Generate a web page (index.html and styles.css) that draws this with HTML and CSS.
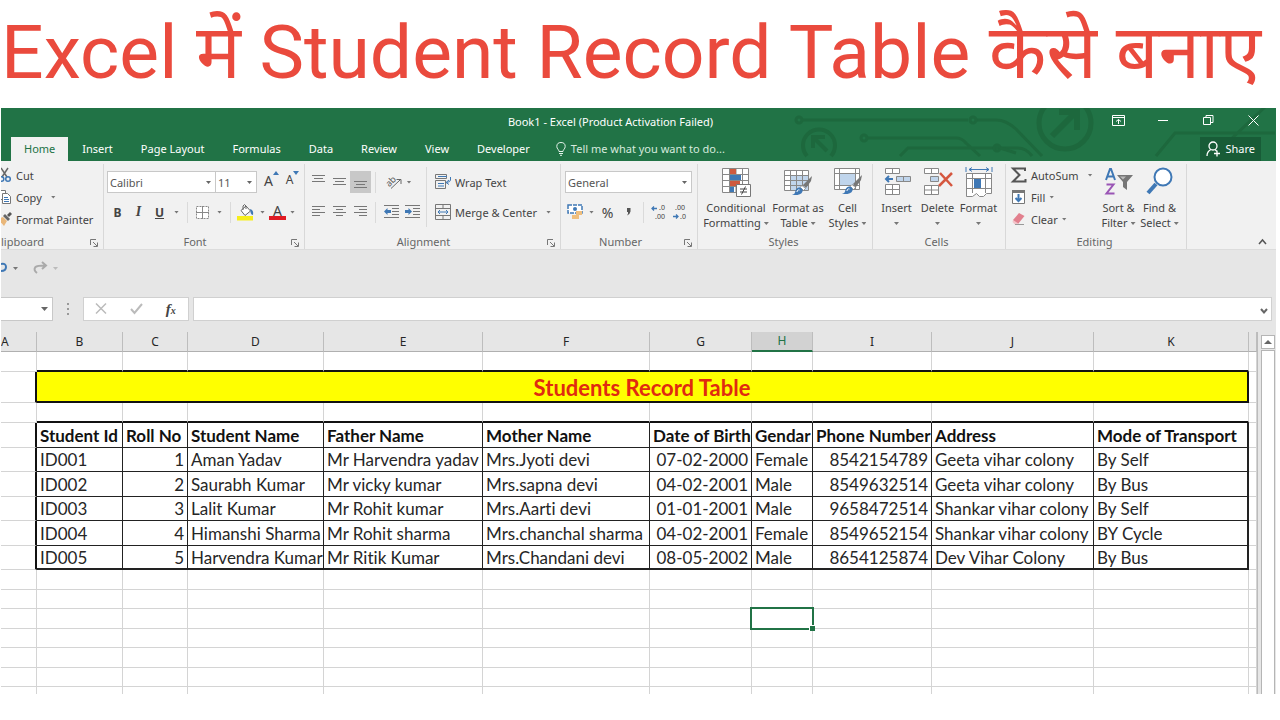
FILE: index.html
```html
<!DOCTYPE html>
<html lang="en">
<head>
  <meta charset="UTF-8" />
  <meta name="viewport" content="width=device-width, initial-scale=1.0"/>
  <title>Student Record Table</title>
  <link rel="stylesheet" href="styles.css">
</head>
<body>

  <!-- shared symbols -->
  <svg class="sprite" aria-hidden="true">
    <symbol id="launcher" viewBox="0 0 8 8"><path d="M.5 6V.5H6M3 3l4 4M7.500 3.500v4h-4" fill="none" stroke="#777"/></symbol>
    <symbol id="brush" viewBox="0 0 22 22"><path d="M21 1l-9 9 3 3 5-7z" fill="#777"/><path d="M11 10.500l3.500 3-2 2-3.500-3z" fill="#fff" stroke="#777" stroke-width=".7"/><path d="M9 12.500c2 .5 3 2 2.500 4-1 3-5 4-10.500 3.500 3-1 3-2.500 3.500-4.500.5-2 2.500-3.500 4.500-3z" fill="#3f78b5"/><path d="M6 17c0-1.500 1-2.500 2.500-2" fill="none" stroke="#fff"/></symbol>
  </svg>

  <h1 class="headline" lang="hi">Excel में Student Record Table कैसे बनाए</h1>

  <div class="window">
    <header class="titlebar">
      <svg class="circuit" width="490" height="53" viewBox="0 0 490 53" fill="none" stroke="#1d683d" stroke-width="3" aria-hidden="true">
        <circle cx="13" cy="12" r="3"/><path d="M16 12h166M190 12h20q10 0 20 9l26 27"/><circle cx="187" cy="12" r="3"/>
        <circle cx="78" cy="30" r="3"/><path d="M81 30h89q6 0 10 5l14 13M114 48l8-8h110q8 0 14 8"/>
        <path d="M21 48a16 16 0 1 1 24 0" stroke-width="4"/><path d="M41 43L27 29M27 40V29h12" stroke-width="4"/>
        <circle cx="279" cy="15" r="26" stroke-width="5"/><path d="M266 28l25-25M273 4h18v18" stroke-width="6"/>
        <circle cx="211" cy="40" r="3"/><path d="M214 40l16 5M370 48l19-23h100M442 34L480-2"/>
      </svg>
      <div class="title-row">
        <div class="doc-title">Book1 - Excel (Product Activation Failed)</div>
        <button class="win-btn" aria-label="Ribbon display options"><svg width="13" height="11" viewBox="0 0 13 11" fill="none" stroke="#fff"><path d="M.5.500h12v10H.5zM.5 2.500h12M6.500 9V4.500M4 6.500l2.500-2 2.500 2"/></svg></button>
        <button class="win-btn" aria-label="Minimize"><svg width="11" height="11" viewBox="0 0 11 11"><path d="M0 5.500h10" stroke="#fff"/></svg></button>
        <button class="win-btn" aria-label="Restore"><svg width="11" height="11" viewBox="0 0 11 11" fill="none" stroke="#fff"><path d="M.5 2.500h7v7h-7zM3 2.500v-2h7v7H7.500"/></svg></button>
        <button class="win-btn" aria-label="Close"><svg width="11" height="11" viewBox="0 0 11 11"><path d="M.5.500l10 10M10.500.500l-10 10" stroke="#fff"/></svg></button>
      </div>
      <nav class="tabs">
        <a href="#home" class="tab active">Home</a>
        <a href="#insert" class="tab">Insert</a>
        <a href="#layout" class="tab">Page Layout</a>
        <a href="#formulas" class="tab">Formulas</a>
        <a href="#data" class="tab">Data</a>
        <a href="#review" class="tab">Review</a>
        <a href="#view" class="tab">View</a>
        <a href="#developer" class="tab">Developer</a>
        <button class="tell-me">
          <svg width="10" height="14" viewBox="0 0 10 14" fill="none" stroke="#e4f2ea"><path d="M3 9.500C3 7.500.8 7 .8 4.500a4.200 4 0 0 1 8.400 0C9.200 7 7 7.500 7 9.500zM3 11.500h4M4 13.300h2"/></svg>
          Tell me what you want to do...
        </button>
        <button class="share">
          <svg width="15" height="16" viewBox="0 0 15 16" fill="none" stroke="#fff" stroke-width="1.300"><circle cx="7" cy="5" r="4"/><path d="M1 15c0-3 2-5.500 4-6.500M9 8.500l1.500 1.500M11 9.500v6M8 12.500h6"/></svg>
          Share
        </button>
      </nav>
    </header>

    <div class="ribbon">
      <section class="group clipboard">
        <div class="stack">
          <button class="tool"><svg width="16" height="16" viewBox="0 0 16 16" fill="none" stroke-width="1.500"><path d="M5 1l6 9M12 1L6 10" stroke="#666"/><circle cx="5.500" cy="12" r="2.300" stroke="#3f78b5"/><circle cx="12" cy="12" r="2.300" stroke="#3f78b5"/></svg>Cut</button>
          <button class="tool"><svg width="16" height="16" viewBox="0 0 16 16" fill="#fff" stroke="#777"><path d="M2.500 1.500h7v9h-7z"/><path d="M6.500 4.500h5l3 3v7h-8z"/><path d="M8 8.500h4M8 10.500h5M8 12.500h5" stroke="#3f78b5"/></svg>Copy<i class="caret"></i></button>
          <button class="tool"><svg width="16" height="16" viewBox="0 0 16 16"><path d="M2 8l5-2 4 4-3 5z" fill="#e9b77a"/><path d="M7 5l2-2 5 5-2 2z" fill="#666"/><path d="M11 4l3-3 2 2-3 3z" fill="#555"/></svg>Format Painter</button>
        </div>
        <div class="group-name"><span>Clipboard</span><svg class="launch"><use href="#launcher"/></svg></div>
      </section>

      <section class="group font">
        <div class="rows">
          <div class="row">
            <label class="drop face"><select aria-label="Font"><option>Calibri</option></select></label>
            <label class="drop size"><select aria-label="Font size"><option>11</option></select></label>
            <button class="icon-btn grow" aria-label="Increase font size">A<svg width="6" height="4"><path d="M0 4l3-4 3 4z" fill="#3f78b5"/></svg></button>
            <button class="icon-btn shrink" aria-label="Decrease font size">A<svg width="6" height="4"><path d="M0 0h6L3 4z" fill="#3f78b5"/></svg></button>
          </div>
          <div class="row">
            <button class="icon-btn"><b>B</b></button>
            <button class="icon-btn ital"><i>I</i></button>
            <button class="icon-btn"><b><u>U</u></b></button>
            <i class="caret"></i>
            <span class="sep"></span>
            <button class="icon-btn" aria-label="Borders"><svg width="13" height="13" viewBox="0 0 13 13" fill="#fff" stroke="#888"><path d="M.5.500h12v12H.5z" stroke-dasharray="2 1"/><path d="M6.500 0v13M0 6.500h13"/></svg></button>
            <i class="caret"></i>
            <span class="sep"></span>
            <button class="icon-btn" aria-label="Fill color"><svg width="17" height="17" viewBox="0 0 17 17"><path d="M0 12h16v4.500H0z" fill="#f6ee1c"/><path d="M4 6.500L9 2l4.500 5L8 11.500z" fill="#fff" stroke="#666"/><path d="M6 6V2q1.500-3 3 0v3" fill="none" stroke="#666"/><path d="M13 5q4 1 3 6-2 0-2.500-3z" fill="#3f78b5"/></svg></button>
            <i class="caret"></i>
            <button class="icon-btn color-a" aria-label="Font color">A</button>
            <i class="caret"></i>
          </div>
        </div>
        <div class="group-name"><span>Font</span><svg class="launch"><use href="#launcher"/></svg></div>
      </section>

      <section class="group align">
        <div class="halves">
          <div class="rows">
            <div class="row">
              <button class="icon-btn" aria-label="Top align"><svg width="15" height="14" stroke="#777"><path d="M1 .5h13M3 3.500h9M1 6.500h13"/></svg></button>
              <button class="icon-btn" aria-label="Middle align"><svg width="15" height="14" stroke="#777"><path d="M1 3.500h13M3 6.500h9M1 9.500h13"/></svg></button>
              <button class="icon-btn pressed" aria-label="Bottom align"><svg width="15" height="14" stroke="#777"><path d="M1 6.500h13M3 9.500h9M1 12.500h13"/></svg></button>
              <span class="sep"></span>
              <button class="icon-btn wide" aria-label="Orientation"><svg width="16" height="14" viewBox="0 0 16 14"><text x="1" y="9" class="ab" transform="rotate(-45 6 8)">ab</text><path d="M5 13.500L14 5M10.500 4.500H15V9" fill="none" stroke="#666"/></svg><i class="caret"></i></button>
            </div>
            <div class="row">
              <button class="icon-btn" aria-label="Align left"><svg width="15" height="12" stroke="#777"><path d="M1 .5h13M1 3.500h8M1 6.500h13M1 9.500h8"/></svg></button>
              <button class="icon-btn" aria-label="Center"><svg width="15" height="12" stroke="#777"><path d="M1 .5h13M4 3.500h7M1 6.500h13M4 9.500h7"/></svg></button>
              <button class="icon-btn" aria-label="Align right"><svg width="15" height="12" stroke="#777"><path d="M1 .5h13M6 3.500h8M1 6.500h13M6 9.500h8"/></svg></button>
              <span class="sep"></span>
              <button class="icon-btn" aria-label="Decrease indent"><svg width="16" height="14" stroke="#777"><path d="M1 .5h15M9 3.500h7M9 6.500h7M9 9.500h7M1 12.500h15"/><path d="M1 6.500l3.500-3.500v2H8v3H4.500v2z" fill="#3f78b5" stroke="none"/></svg></button>
              <button class="icon-btn" aria-label="Increase indent"><svg width="16" height="14" stroke="#777"><path d="M1 .5h15M9 3.500h7M9 6.500h7M9 9.500h7M1 12.500h15"/><path d="M8 6.500L4.500 3v2H1v3h3.500v2z" fill="#3f78b5" stroke="none"/></svg></button>
            </div>
          </div>
          <span class="sep tall"></span>
          <div class="rows">
            <button class="tool"><svg width="16" height="16" viewBox="0 0 16 16" fill="none" stroke="#777"><path d="M.5.500h11v4H.5zM.5 6.500h10v8H.5z"/><path d="M3 2.500h9M3 9.500h6M3 12h6" stroke="#3f78b5"/><path d="M15.500 3v3q0 2-4 2.500M14 6l-3 2.500 3 2" stroke="#3f78b5"/></svg>Wrap Text</button>
            <button class="tool"><svg width="16" height="16" viewBox="0 0 16 16" fill="none" stroke="#777"><path d="M.5.500h15v15H.5zM.5 4.500h15M.5 11.500h15M8 .5v4M8 11.500v4"/><path d="M3 8h10M5 6L3 8l2 2M11 6l2 2-2 2" stroke="#3f78b5"/></svg>Merge &amp; Center<i class="caret"></i></button>
          </div>
        </div>
        <div class="group-name"><span>Alignment</span><svg class="launch"><use href="#launcher"/></svg></div>
      </section>

      <section class="group number">
        <div class="rows">
          <div class="row">
            <label class="drop format"><select aria-label="Number format"><option>General</option></select></label>
          </div>
          <div class="row">
            <button class="icon-btn" aria-label="Accounting format"><svg width="17" height="16" viewBox="0 0 17 16"><path d="M1 1h14v8H1z" fill="#fff" stroke="#3f78b5" stroke-width="1.500" stroke-dasharray="4 1"/><circle cx="8" cy="5" r="2" fill="#3f78b5"/><path d="M9 7h6v4H9zM5 11h7v4H5z" fill="#efbe7d"/></svg></button>
            <i class="caret"></i>
            <button class="icon-btn pct">%</button>
            <button class="icon-btn comma" aria-label="Comma style"><svg width="5" height="8" viewBox="0 0 5 8"><path d="M1 0h3.500v3.500Q4 6.500 1 7.500q1.500-2 1-3.500H1z" fill="#555"/></svg></button>
            <span class="sep"></span>
            <button class="icon-btn" aria-label="Increase decimal"><svg width="16" height="18" viewBox="0 0 16 18"><path d="M6 5.500H1M3 3.500l-2 2 2 2" fill="none" stroke="#3f78b5" stroke-width="1.300"/><text x="8" y="7" class="dec">.0</text><text x="4" y="16" class="dec">.00</text></svg></button>
            <button class="icon-btn" aria-label="Decrease decimal"><svg width="16" height="18" viewBox="0 0 16 18"><text x="3" y="7" class="dec">.00</text><path d="M1 13.500h5M4 11.500l2 2-2 2" fill="none" stroke="#3f78b5" stroke-width="1.300"/><text x="8" y="16" class="dec">.0</text></svg></button>
          </div>
        </div>
        <div class="group-name"><span>Number</span><svg class="launch"><use href="#launcher"/></svg></div>
      </section>

      <section class="group styles">
        <div class="bigs">
          <button class="big w-cond"><svg width="30" height="30" viewBox="0 0 30 30"><path d="M1.500 1.500h26v24h-26zM8.500 1v25M15 1v25M21.500 1v25M1 7.500h27M1 13.500h27M1 19.500h27" fill="#fff" stroke="#888"/><path d="M9 2h6v5H9zM9 14h10v5H9z" fill="#cf5a3f"/><path d="M9 8h11v5H9zM9 20h4v5H9z" fill="#3f78b5"/><path d="M15.500 17.500h14v12h-14z" fill="#fff" stroke="#777"/><path d="M19 22h7M19 25h7M24.500 19.500l-4 8" stroke="#444"/></svg><span>Conditional<br>Formatting<i class="caret"></i></span></button>
          <button class="big w-table"><svg width="30" height="30" viewBox="0 0 30 30"><path d="M1.500 3.500h24v20h-24z" fill="#fff"/><path d="M8 9h17v14H8z" fill="#c0d5ec"/><path d="M1.500 3.500h24v20h-24zM7.500 3v20M13.500 3v20M19.500 3v20M1 8.500h24M1 13.500h24M1 18.500h24" fill="none" stroke="#888"/><use href="#brush" x="8" y="8" width="22" height="22"/></svg><span>Format as<br>Table<i class="caret"></i></span></button>
          <button class="big w-cell"><svg width="30" height="30" viewBox="0 0 30 30"><path d="M1.500 1.500h25v21h-25zM6.500 1v21M22.500 1v21M1 6.500h25M1 18.500h25" fill="#fff" stroke="#888"/><path d="M7 7h15v11H7z" fill="#c0d5ec"/><use href="#brush" x="8" y="7" width="22" height="22"/></svg><span>Cell<br>Styles<i class="caret"></i></span></button>
        </div>
        <div class="group-name"><span>Styles</span></div>
      </section>

      <section class="group cells">
        <div class="bigs">
          <button class="big"><svg width="28" height="30" viewBox="0 0 28 30" fill="#fff" stroke="#888"><path d="M2.500 1.500h14v5h-14zM9.500 1v5M2.500 17.500h14v10h-14zM9.500 17v10M2 22.500h14"/><path d="M13.500 9.500h14v5h-14zM20.500 9v6" fill="#c0d5ec"/><path d="M10 12H3M6 9l-3 3 3 3" fill="none" stroke="#3f78b5" stroke-width="2"/></svg><span>Insert<br><i class="caret"></i></span></button>
          <button class="big"><svg width="30" height="30" viewBox="0 0 30 30" fill="#fff" stroke="#888"><path d="M1.500 1.500h14v5h-14zM8.500 1v5M1.500 18.500h14v9h-14zM8.500 18v9M1 23h14"/><path d="M7.500 9.500h8v5h-8z" fill="#c0d5ec"/><path d="M17 6l12 13M29 6L16 19" fill="none" stroke="#d5573f" stroke-width="2.500"/></svg><span>Delete<br><i class="caret"></i></span></button>
          <button class="big"><svg width="28" height="30" viewBox="0 0 28 30" fill="#fff" stroke="#888"><path d="M1.500 6.500h25v20h-5l-3 3h-4l-3-3-4 3h-6zM7.500 6v20M20.500 6v20M1 11.500h25M1 21.500h25"/><path d="M9 12h7v9H9z" fill="#3f78b5" stroke="none"/><path d="M1 0v5M27 0v5M4 2.500h20M7 .5l-3 2 3 2M21 .5l3 2-3 2" fill="none" stroke="#3f78b5"/></svg><span>Format<br><i class="caret"></i></span></button>
        </div>
        <div class="group-name"><span>Cells</span></div>
      </section>

      <section class="group editing">
        <div class="halves">
          <div class="stack">
            <button class="tool"><svg width="16" height="16" viewBox="0 0 16 16"><path d="M14 4V1.500H2L8.500 8 2 14.500h12.500V12" fill="none" stroke="#555" stroke-width="2"/></svg>AutoSum<i class="caret far"></i></button>
            <button class="tool"><svg width="16" height="16" viewBox="0 0 16 16"><path d="M1.500 1.500h12v13h-12z" fill="#fff" stroke="#777"/><path d="M1 1h13v3H1z" fill="#777"/><path d="M7.500 5v7M4.500 9l3 3 3-3" fill="none" stroke="#3f78b5" stroke-width="2"/></svg>Fill<i class="caret"></i></button>
            <button class="tool"><svg width="16" height="16" viewBox="0 0 16 16"><path d="M2 9l6-7 5.500 3-6.500 8H4z" fill="#e2808e"/><path d="M2 9l5.500 3.500-1 1H4L1.500 11z" fill="#f3c4ca"/><path d="M4 13.500h9" stroke="#999"/></svg>Clear<i class="caret"></i></button>
          </div>
          <div class="bigs">
            <button class="big"><svg width="28" height="30" viewBox="0 0 28 30"><path d="M1 13L5 2h1l4 11M2.500 9.500h6" fill="none" stroke="#3f78b5" stroke-width="2"/><path d="M1.500 17.500h7l-7 9h8" fill="none" stroke="#9a55b5" stroke-width="2"/><path d="M12 8h16l-6 7v8l-4-3v-5z" fill="#777"/><path d="M15 9.500h6l-3 3z" fill="#bbb"/></svg><span>Sort &amp;<br>Filter<i class="caret"></i></span></button>
            <button class="big"><svg width="28" height="30" viewBox="0 0 28 30"><path d="M2 26l8-9" stroke="#3f78b5" stroke-width="4"/><circle cx="17" cy="10" r="8.500" fill="#fff" stroke="#3f78b5" stroke-width="2"/></svg><span>Find &amp;<br>Select<i class="caret"></i></span></button>
          </div>
        </div>
        <div class="group-name"><span>Editing</span></div>
      </section>

      <button class="collapse" aria-label="Collapse ribbon"><svg width="9" height="6" viewBox="0 0 9 6"><path d="M1 5l3.500-4L8 5" fill="none" stroke="#555" stroke-width="1.500"/></svg></button>
    </div>

    <div class="quick">
      <button aria-label="Undo"><svg width="7" height="12" viewBox="0 0 7 12"><path d="M0 3q5-1 5 3T0 10" fill="none" stroke="#3f78b5" stroke-width="2"/></svg></button>
      <i class="caret"></i>
      <button class="redo" aria-label="Redo"><svg width="15" height="13" viewBox="0 0 15 13" fill="none" stroke="#aaa" stroke-width="2"><path d="M4 12Q0 9 2.500 6 4 4.500 12 4.500M9 1l4 3.500L9 8"/></svg></button>
      <i class="caret pale"></i>
    </div>

    <div class="formula">
      <label class="drop name-box"><select aria-label="Name box"><option></option></select></label>
      <svg class="dots" width="2" height="12" fill="#999"><path d="M0 0h2v2H0zM0 5h2v2H0zM0 10h2v2H0z"/></svg>
      <div class="fx-tools">
        <button aria-label="Cancel"><svg width="12" height="11" viewBox="0 0 12 11"><path d="M1 .5l10 10M11 .5l-10 10" stroke="#bbb" stroke-width="1.500"/></svg></button>
        <button aria-label="Enter"><svg width="13" height="11" viewBox="0 0 13 11"><path d="M1 6l3.500 4L12 1" fill="none" stroke="#bbb" stroke-width="2"/></svg></button>
        <button class="fx">f<small>x</small></button>
      </div>
      <div class="fx-input">
        <input type="text" aria-label="Formula bar">
        <button aria-label="Expand formula bar"><svg width="8" height="6" viewBox="0 0 8 6"><path d="M1 1l3 3.500L7 1" fill="none" stroke="#666" stroke-width="2"/></svg></button>
      </div>
    </div>

    <div class="sheet">
      <table>
        <colgroup>
          <col class="ca"><col class="cb"><col class="cc"><col class="cd"><col class="ce"><col class="cf"><col class="cg"><col class="ch"><col class="ci"><col class="cj"><col class="ck"><col class="cl">
        </colgroup>
        <thead>
          <tr><th class="first">A</th><th>B</th><th>C</th><th>D</th><th>E</th><th>F</th><th>G</th><th class="current">H</th><th>I</th><th>J</th><th>K</th><th></th></tr>
        </thead>
        <tbody>
          <tr class="blank above"><td></td><td></td><td></td><td></td><td></td><td></td><td></td><td></td><td></td><td></td><td></td><td></td></tr>
          <tr class="banner"><td class="edge"></td><td colspan="10">Students Record Table</td><td></td></tr>
          <tr class="blank above"><td></td><td></td><td></td><td></td><td></td><td></td><td></td><td></td><td></td><td></td><td></td><td></td></tr>
          <tr class="rec names"><td class="edge"></td><td>Student Id</td><td>Roll No</td><td>Student Name</td><td>Father Name</td><td>Mother Name</td><td>Date of Birth</td><td>Gendar</td><td>Phone Number</td><td>Address</td><td>Mode of Transport</td><td></td></tr>
          <tr class="rec"><td class="edge"></td><td>ID001</td><td class="num">1</td><td>Aman Yadav</td><td>Mr Harvendra yadav</td><td>Mrs.Jyoti devi</td><td class="num">07-02-2000</td><td>Female</td><td class="num">8542154789</td><td>Geeta vihar colony</td><td>By Self</td><td></td></tr>
          <tr class="rec"><td class="edge"></td><td>ID002</td><td class="num">2</td><td>Saurabh Kumar</td><td>Mr vicky kumar</td><td>Mrs.sapna devi</td><td class="num">04-02-2001</td><td>Male</td><td class="num">8549632514</td><td>Geeta vihar colony</td><td>By Bus</td><td></td></tr>
          <tr class="rec"><td class="edge"></td><td>ID003</td><td class="num">3</td><td>Lalit Kumar</td><td>Mr Rohit kumar</td><td>Mrs.Aarti devi</td><td class="num">01-01-2001</td><td>Male</td><td class="num">9658472514</td><td>Shankar vihar colony</td><td>By Self</td><td></td></tr>
          <tr class="rec"><td class="edge"></td><td>ID004</td><td class="num">4</td><td>Himanshi Sharma</td><td>Mr Rohit sharma</td><td>Mrs.chanchal sharma</td><td class="num">04-02-2001</td><td>Female</td><td class="num">8549652154</td><td>Shankar vihar colony</td><td>BY Cycle</td><td></td></tr>
          <tr class="rec last"><td class="edge"></td><td>ID005</td><td class="num">5</td><td>Harvendra Kumar</td><td>Mr Ritik Kumar</td><td>Mrs.Chandani devi</td><td class="num">08-05-2002</td><td>Male</td><td class="num">8654125874</td><td>Dev Vihar Colony</td><td>By Bus</td><td></td></tr>
          <tr class="blank"><td></td><td></td><td></td><td></td><td></td><td></td><td></td><td></td><td></td><td></td><td></td><td></td></tr>
          <tr class="blank"><td></td><td></td><td></td><td></td><td></td><td></td><td></td><td></td><td></td><td></td><td></td><td></td></tr>
          <tr class="blank"><td></td><td></td><td></td><td></td><td></td><td></td><td></td><td class="selected"></td><td></td><td></td><td></td><td></td></tr>
          <tr class="blank"><td></td><td></td><td></td><td></td><td></td><td></td><td></td><td></td><td></td><td></td><td></td><td></td></tr>
          <tr class="blank"><td></td><td></td><td></td><td></td><td></td><td></td><td></td><td></td><td></td><td></td><td></td><td></td></tr>
          <tr class="blank"><td></td><td></td><td></td><td></td><td></td><td></td><td></td><td></td><td></td><td></td><td></td><td></td></tr>
          <tr class="cut"><td></td><td></td><td></td><td></td><td></td><td></td><td></td><td></td><td></td><td></td><td></td><td></td></tr>
        </tbody>
      </table>
      <div class="scroller">
        <button aria-label="Scroll up"><svg width="8" height="4"><path d="M0 4l4-4 4 4z" fill="#666"/></svg></button>
        <div class="track"></div>
      </div>
    </div>
  </div>

</body>
</html>
```

FILE: styles.css
```css
:root {
  --green: #217346;
  --ribbon: #f1f1f1;
  --bar: #e6e6e6;
  --line: #d4d4d4;
  --ink: #444;
}

* {
  box-sizing: border-box;
}

body {
  margin: 0;
  background: #fff;
  font-family: "Noto Sans", "Open Sans", sans-serif;
  font-size: 11px;
  color: var(--ink);
}

button {
  font: inherit;
  color: inherit;
  background: none;
  border: none;
  padding: 0;
  white-space: nowrap;
}

svg {
  flex: none;
  overflow: visible;
}

.sprite {
  position: absolute;
  width: 0;
  height: 0;
}

.headline {
  margin: 0;
  height: 108px;
  padding-left: 1px;
  font-family: Roboto, "Noto Sans", sans-serif;
  font-size: 75px;
  font-weight: 400;
  line-height: 104px;
  color: #ea4a3d;
  white-space: nowrap;
  overflow: hidden;
}

.window {
  margin: 0 4px 0 1px;
  overflow: hidden;
}

/* title bar and tabs */
.titlebar {
  position: relative;
  background: var(--green);
  color: #fff;
}

.circuit {
  position: absolute;
  top: 0;
  right: 0;
  overflow: hidden;
}

.title-row {
  position: relative;
  display: flex;
  align-items: center;
  height: 29px;
  padding-bottom: 4px;
}

.doc-title {
  flex: 1;
  padding: 2px 0 0 124px;
  text-align: center;
}

.win-btn {
  width: 45px;
  height: 24px;
  display: flex;
  align-items: center;
  justify-content: center;
}

.tabs {
  position: relative;
  display: flex;
  height: 24px;
  padding: 0 15px 0 10px;
  line-height: 24px;
}

.tab {
  padding: 0 14px;
  color: #fff;
  text-decoration: none;
}

.tab.active {
  padding: 0 13px;
  background: var(--ribbon);
  color: var(--green);
}

.tell-me {
  display: flex;
  align-items: center;
  gap: 5px;
  padding-left: 12px;
  color: #d6eade;
}

.share {
  display: flex;
  align-items: center;
  gap: 4px;
  margin-left: auto;
  padding: 0 6px;
  background: #185c37;
}

/* ribbon */
.ribbon {
  display: flex;
  height: 89px;
  padding-top: 3px;
  background: var(--ribbon);
  border-bottom: 1px solid #dcdcdc;
}

.group {
  display: flex;
  flex-direction: column;
  flex: none;
  border-right: 1px solid #d8d8d8;
}

.group-name {
  position: relative;
  display: flex;
  justify-content: center;
  margin-top: auto;
  padding-right: 8px;
  line-height: 14px;
  color: #666;
}

.launch {
  position: absolute;
  right: 5px;
  bottom: 2px;
  width: 8px;
  height: 8px;
}

.clipboard {
  width: 108px;
  margin-left: -5px;
}

.clipboard .group-name {
  justify-content: flex-start;
}

.clipboard .group-name span {
  margin-left: -2px;
}

.font { width: 201px; padding-left: 3px; }
.align { width: 256px; padding-left: 3px; }
.number { width: 137px; padding-left: 4px; }
.styles { width: 175px; padding-left: 5px; }
.cells { width: 133px; padding-left: 3px; }
.editing { width: 181px; padding-left: 5px; }

.font .group-name,
.align .group-name,
.number .group-name {
  padding-right: 21px;
}

.stack {
  display: grid;
  grid-template-rows: repeat(3, 22px);
  justify-items: start;
}

.rows {
  display: grid;
  grid-template-rows: 30px 30px;
  justify-items: start;
  padding-top: 3px;
}

.row,
.halves,
.bigs {
  display: flex;
}

.row {
  align-items: center;
}

.tool {
  display: flex;
  align-items: center;
  gap: 4px;
}

.caret {
  display: inline-block;
  flex: none;
  width: 5px;
  height: 3px;
  margin: 0 5px;
  background: #777;
  clip-path: polygon(0 0, 100% 0, 50% 100%);
}

.caret.pale {
  background: #bbb;
}

.editing .tool .caret {
  margin: 0;
}

.editing .tool .far {
  margin-left: 5px;
}

.sep {
  width: 1px;
  height: 21px;
  margin: 0 4px;
  background: #dadada;
}

.sep.tall {
  height: 60px;
  margin: 3px 8px 0 4px;
}

.icon-btn {
  display: flex;
  align-items: center;
  justify-content: center;
  width: 21px;
  height: 22px;
  font-size: 12px;
}

.icon-btn.wide {
  width: 42px;
}

.icon-btn.pressed {
  background: #c8c8c8;
}

.font .row .caret {
  margin: 0 4px;
}

.grow { font-size: 14px; margin-left: 4px; }
.grow, .shrink { align-items: flex-start; }
.pct { font-size: 14px; }
.ital { font-family: "Liberation Serif", serif; font-weight: 700; font-size: 14px; }

.number .row .caret {
  margin: 0 3px;
}

.color-a {
  width: 17px;
  height: 16px;
  border-bottom: 4px solid #e01b24;
  font-size: 14px;
}

.ab {
  font-size: 9px;
  fill: #555;
}

.dec {
  font-size: 7px;
  fill: #444;
}

.drop {
  position: relative;
  display: block;
  height: 22px;
  background: #fff;
  border: 1px solid #c8c8c8;
}

.drop::after {
  content: "";
  position: absolute;
  right: 4px;
  top: 9px;
  width: 5px;
  height: 3px;
  background: #666;
  clip-path: polygon(0 0, 100% 0, 50% 100%);
}

.drop select {
  appearance: none;
  width: 100%;
  height: 100%;
  padding: 0 2px;
  border: none;
  background: none;
  font: inherit;
  color: #555;
}

.face { width: 109px; }
.size { width: 42px; margin-left: -1px; }
.format { width: 127px; }

.big {
  display: flex;
  flex-direction: column;
  align-items: center;
  width: 41px;
  padding-top: 3px;
  line-height: 15px;
}

.big span {
  display: block;
  padding-top: 3px;
}

.big .caret {
  margin: 0 0 2px 3px;
}

.cells .big .caret {
  margin-left: 0;
}

.w-cond { width: 66px; }
.w-table { width: 58px; }

.editing .stack {
  width: 87px;
}

.collapse {
  display: flex;
  align-items: center;
  margin: auto 9px 2px auto;
  height: 10px;
}

/* quick access and formula bar */
.quick {
  display: flex;
  align-items: center;
  height: 47px;
  padding-bottom: 10px;
  background: var(--bar);
}

.quick .redo {
  margin-left: 10px;
}

.formula {
  display: flex;
  align-items: center;
  height: 35px;
  padding: 0 4px 11px 0;
  background: var(--bar);
}

.name-box {
  width: 52px;
  height: 24px;
  border-left: none;
}

.name-box::after {
  width: 7px;
  height: 4px;
}

.dots {
  margin: 0 14px;
}

.fx-tools,
.fx-input {
  display: flex;
  align-items: center;
  height: 24px;
  background: #fff;
  border: 1px solid #d0d0d0;
}

.fx-tools {
  width: 106px;
  margin-right: 4px;
}

.fx-tools button {
  flex: 1;
}

.fx {
  font-family: "Liberation Serif", serif;
  font-size: 15px;
  font-style: italic;
  font-weight: 700;
}

.fx small {
  font-size: 10px;
}

.fx-input {
  flex: 1;
  padding-right: 3px;
}

.fx-input input {
  flex: 1;
  height: 100%;
  border: none;
}

/* worksheet */
.sheet {
  display: flex;
  background: var(--bar);
}

.sheet table {
  flex: 1;
  width: 100%;
  table-layout: fixed;
  border-spacing: 0;
  background: #fff;
  font-family: Lato, "Noto Sans", sans-serif;
  font-size: 17px;
  font-variant-ligatures: none;
  line-height: 20px;
  color: #262626;
}

.ca { width: 36px; }
.cb { width: 86px; }
.cc { width: 65px; }
.cd { width: 136px; }
.ce { width: 159px; }
.cf { width: 167px; }
.cg { width: 102px; }
.ch { width: 61px; }
.ci { width: 119px; }
.cj { width: 162px; }
.ck { width: 155px; }
.cl { width: 8px; }

th {
  height: 20px;
  padding: 0;
  background: var(--bar);
  border-right: 1px solid #bdbdbd;
  border-bottom: 1px solid #b0b0b0;
  font-family: "Noto Sans", sans-serif;
  font-size: 12px;
  font-weight: 400;
  line-height: 18px;
}

th.first {
  text-align: left;
}

th.current {
  background: #d2d2d2;
  border-bottom: 2px solid var(--green);
  color: var(--green);
}

td {
  padding: 0 3px;
  border-right: 1px solid var(--line);
  border-bottom: 1px solid var(--line);
  white-space: nowrap;
  overflow: hidden;
}

.blank td {
  height: 20px;
}

.blank:nth-child(odd) td {
  height: 19px;
}

.blank.above td {
  height: 20px;
}

.above td:nth-child(n+2):nth-child(-n+11) {
  border-bottom: 2px solid #111;
}

.banner td {
  height: 31px;
}

.banner td[colspan] {
  padding-top: 2px;
  background: #ff0;
  border-right: 2px solid #111;
  border-bottom: 2px solid #111;
  font-size: 22px;
  font-weight: 700;
  line-height: 27px;
  text-align: center;
  color: #e02a10;
}

.rec td {
  height: 24px;
  padding-top: 1px;
}

.rec:nth-child(even) td {
  height: 25px;
}

.rec td:nth-child(n+2):nth-child(-n+11) {
  border-color: #222;
}

.rec td:nth-child(11) {
  border-right-width: 2px;
}

.rec.last td:nth-child(n+2):nth-child(-n+11) {
  border-bottom-width: 2px;
}

td.edge {
  border-right: 2px solid #111;
}

.names td {
  font-weight: 700;
  color: #111;
}

.num {
  text-align: right;
}

.cut td {
  height: 7px;
  border-bottom: none;
}

.selected {
  position: relative;
  overflow: visible;
}

.selected::before {
  content: "";
  position: absolute;
  inset: -2px;
  border: 2px solid var(--green);
}

.selected::after {
  content: "";
  position: absolute;
  right: -3px;
  bottom: -3px;
  width: 5px;
  height: 5px;
  background: var(--green);
  border: 1px solid #fff;
  border-width: 1px 0 0 1px;
}

.scroller {
  display: flex;
  flex-direction: column;
  flex: none;
  width: 20px;
  padding: 3px 2px 0 3px;
  border-left: 1px solid #bbb;
}

.scroller button {
  display: flex;
  align-items: center;
  justify-content: center;
  height: 14px;
  margin-bottom: 1px;
  background: #fff;
  border: 1px solid #b5b5b5;
}

.track {
  flex: 1;
  background: #fff;
  border: 1px solid #b5b5b5;
  border-bottom: none;
}
```
